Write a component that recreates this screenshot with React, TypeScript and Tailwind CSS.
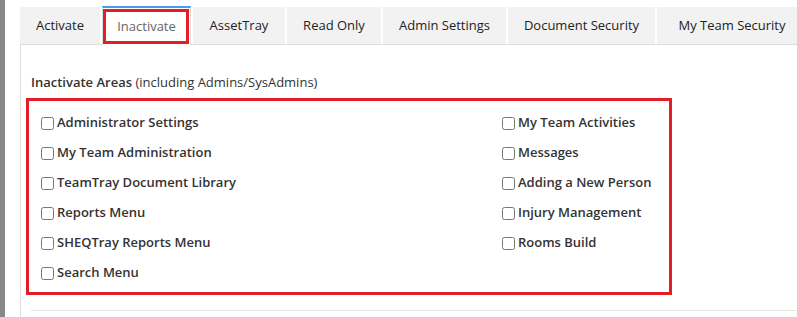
import React from "react";

const TABS = [
  { label: "Activate", w: "w-[80px]" },
  { label: "Inactivate", w: "w-[89px]", active: true },
  { label: "AssetTray", w: "w-[92px]" },
  { label: "Read Only", w: "w-[94px]" },
  { label: "Admin Settings", w: "w-[123px]" },
  { label: "Document Security", w: "w-[147px]" },
  { label: "My Team Security", w: "w-[150px]" },
];

const LEFT = [
  "Administrator Settings",
  "My Team Administration",
  "TeamTray Document Library",
  "Reports Menu",
  "SHEQTray Reports Menu",
  "Search Menu",
];

const RIGHT = ["My Team Activities", "Messages", "Adding a New Person", "Injury Management", "Rooms Build"];

function Check({ label }: { label: string }) {
  return (
    <label className="flex items-center h-[30px] text-[13px] font-semibold text-[#333]">
      <input type="checkbox" className="w-[13px] h-[13px] m-0 mr-[3px]" />
      {label}
    </label>
  );
}

export default function App() {
  return (
    <div className="flex w-[797px] h-[317px] overflow-hidden bg-white" style={{ fontFamily: '"Open Sans", sans-serif' }}>
      <div className="w-[5px] shrink-0 bg-[#888]" />
      <div className="flex-1 pl-[15px] pt-[6px] min-w-0">
        {/* tabs */}
        <div className="flex h-[39px] border-b border-[#ddd] whitespace-nowrap">
          {TABS.map((t) =>
            t.active ? (
              <div
                key={t.label}
                className={`relative ${t.w} shrink-0 mr-[2px] -mb-[1px] bg-white border-t-2 border-x border-[#ddd] border-t-[#4a9be8] flex items-center justify-center text-[13px] text-[#666]`}
              >
                <div className="absolute left-0 right-[1px] top-[1px] bottom-[1px] border-[3px] border-[#e21f26]" />
                {t.label}
              </div>
            ) : (
              <div
                key={t.label}
                className={`${t.w} shrink-0 mr-[2px] mt-[1px] bg-[#f2f2f2] flex items-center justify-center text-[13px] text-[#222]`}
              >
                {t.label}
              </div>
            )
          )}
        </div>

        {/* panel */}
        <div className="border-l border-[#ddd] h-full pl-[10px] pt-[28px]">
          <div className="text-[13px] text-[#333] leading-[18px]">
            <span className="font-semibold">Inactivate Areas</span> (including Admins/SysAdmins)
          </div>
          <div className="mt-[7px] -ml-[5px] w-[646px] border-[3px] border-[#e21f26] pt-[7px] pb-[4px] pl-[12px] grid grid-cols-[461px_1fr]">
            <div className="flex flex-col">
              {LEFT.map((l) => (
                <Check key={l} label={l} />
              ))}
            </div>
            <div className="flex flex-col">
              {RIGHT.map((l) => (
                <Check key={l} label={l} />
              ))}
            </div>
          </div>
          <div className="mt-[15px] border-t border-[#e5e5e5]" />
        </div>
      </div>
    </div>
  );
}
